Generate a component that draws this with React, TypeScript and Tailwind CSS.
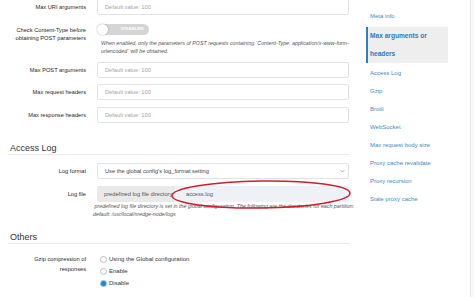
import React from "react";

const sideItems = [
  "Access Log",
  "Gzip",
  "Brotli",
  "WebSocket",
  "Max request body size",
  "Proxy cache revalidate",
  "Proxy recursion",
  "Stale proxy cache",
];

function Label({ children, className = "" }: { children: React.ReactNode; className?: string }) {
  return (
    <div className={`text-right text-[5.7px] text-[#1f1f1f] leading-[8px] ${className}`}>
      {children}
    </div>
  );
}

function NumberInput() {
  return (
    <div className="h-[16px] border border-[#e2e2e2] rounded-[2px] bg-white flex items-center pl-[7px] text-[5.7px] text-[#a3a3a3]">
      Default value: 100
    </div>
  );
}

function Heading({ title, className = "" }: { title: string; className?: string }) {
  return (
    <div
      className={`ml-[8px] w-[341px] h-[13px] leading-[13px] pl-[2px] text-[9px] text-[#333] border-b border-[#e9e9e9] ${className}`}
    >
      {title}
    </div>
  );
}

function Radio({ label, checked = false }: { label: string; checked?: boolean }) {
  return (
    <div className="flex items-center h-[12px] gap-[2px] pl-[3px]">
      {checked ? (
        <span className="w-[7px] h-[7px] rounded-full bg-[#9cc7ec] flex items-center justify-center">
          <span className="w-[5px] h-[5px] rounded-full bg-[#2a84d2]" />
        </span>
      ) : (
        <span className="w-[7px] h-[7px] rounded-full border border-[#bdbdbd] bg-white" />
      )}
      <span className="text-[6px] text-[#333]">{label}</span>
    </div>
  );
}

export default function App() {
  return (
    <div
      className="relative w-[474px] h-[297px] overflow-hidden bg-white flex"
      style={{ fontFamily: '"Liberation Sans", Arial, sans-serif' }}
    >
      {/* form column */}
      <div className="w-[366px] shrink-0">
        <div className="grid grid-cols-[86px_252px] gap-x-[11px] items-center mt-[-1px]">
          <Label>Max URI arguments</Label>
          <NumberInput />
        </div>

        <div className="grid grid-cols-[86px_252px] gap-x-[11px] items-start mt-[9px]">
          <Label className="pt-[2px]">
            Check Content-Type before
            <br />
            obtaining POST parameters
          </Label>
          <div>
            <div className="relative w-[52px] h-[11px] rounded-full bg-[#d5d5d5] flex items-center">
              <span className="absolute left-0 top-0 w-[11px] h-[11px] rounded-full bg-white shadow-[0_0_1.5px_rgba(0,0,0,0.35)]" />
              <span className="ml-[24px] text-[4.3px] font-bold text-white tracking-[0.1px]">DISABLED</span>
            </div>
            <div className="mt-[4px] pl-[4px] text-[5.3px] italic leading-[8px] text-[#555]">
              When enabled, only the parameters of POST requests containing `Content-Type: application/x-www-form-
              <br />
              urlencoded` will be obtained.
            </div>
          </div>
        </div>

        <div className="grid grid-cols-[86px_252px] gap-x-[11px] items-center mt-[7px]">
          <Label>Max POST arguments</Label>
          <NumberInput />
        </div>
        <div className="grid grid-cols-[86px_252px] gap-x-[11px] items-center mt-[6px]">
          <Label>Max request headers</Label>
          <NumberInput />
        </div>
        <div className="grid grid-cols-[86px_252px] gap-x-[11px] items-center mt-[7px]">
          <Label>Max response headers</Label>
          <NumberInput />
        </div>

        <Heading title="Access Log" className="mt-[19px]" />

        <div className="grid grid-cols-[86px_252px] gap-x-[11px] items-center mt-[8px]">
          <Label>Log format</Label>
          <div className="h-[16px] border border-[#e2e2e2] rounded-[2px] bg-white flex items-center justify-between pl-[7px] pr-[3px] text-[5.7px] text-[#444]">
            <span>Use the global config's log_format setting</span>
            <svg width="5" height="4" viewBox="0 0 10 6" fill="none" stroke="#888" strokeWidth="1.4">
              <path d="M1 1l4 4 4-4" />
            </svg>
          </div>
        </div>

        <div className="grid grid-cols-[86px_252px] gap-x-[11px] items-center mt-[7px]">
          <Label>Log file</Label>
          <div className="h-[16px] flex rounded-[2px] overflow-hidden">
            <div className="w-[78px] shrink-0 bg-[#e9e9e9] flex items-center pl-[7px] text-[5.7px] text-[#555] whitespace-nowrap overflow-hidden">
              predefined log file directory
            </div>
            <div className="flex-1 bg-[#eef1f5] flex items-center pl-[11px] text-[5.7px] text-[#555]">
              access.log
            </div>
          </div>
        </div>
        <div className="pl-[93px] text-[5.3px] italic leading-[8px] text-[#555]">
          &nbsp;predefined log file directory is set in the global configuration. The following are the directories for each partition:
          <br />
          default: /usr/local/nredge-node/logs
        </div>

        <Heading title="Others" className="mt-[13px]" />

        <div className="grid grid-cols-[86px_252px] gap-x-[11px] items-start mt-[9px]">
          <Label className="pt-[1px] leading-[10px]">
            Gzip compression of
            <br />
            responses
          </Label>
          <div>
            <Radio label="Using the Global configuration" />
            <Radio label="Enable" />
            <Radio label="Disable" checked />
          </div>
        </div>
      </div>

      {/* side menu */}
      <div className="w-[82px] shrink-0 pt-[7px]">
        <div className="h-[18px] leading-[18px] pl-[4px] text-[6px] text-[#3d8cc6]">Meta info</div>
        <div className="mt-[2px] bg-[#eeeeee] border-l-2 border-[#2f7fbf] pl-[2px] text-[6.6px] font-bold leading-[18px] text-[#2a7bbb]">
          Max arguments or
          <br />
          headers
        </div>
        <div className="mt-[1px]">
          {sideItems.map((item) => (
            <div key={item} className="h-[18px] leading-[18px] pl-[4px] text-[6px] text-[#3d8cc6] whitespace-nowrap">
              {item}
            </div>
          ))}
        </div>
      </div>

      <div className="flex-1" />
      <div className="w-[4px] shrink-0 border-l border-[#e6e6e6] bg-[#f8f8f8]" />

      {/* red annotation */}
      <svg className="absolute left-[168px] top-[178px] pointer-events-none" width="188" height="34" viewBox="0 0 188 34">
        <ellipse cx="93" cy="16.5" rx="89" ry="13.5" fill="none" stroke="#cc1f2b" strokeWidth="1.5" transform="rotate(-0.8 93 16.5)" />
      </svg>
    </div>
  );
}
